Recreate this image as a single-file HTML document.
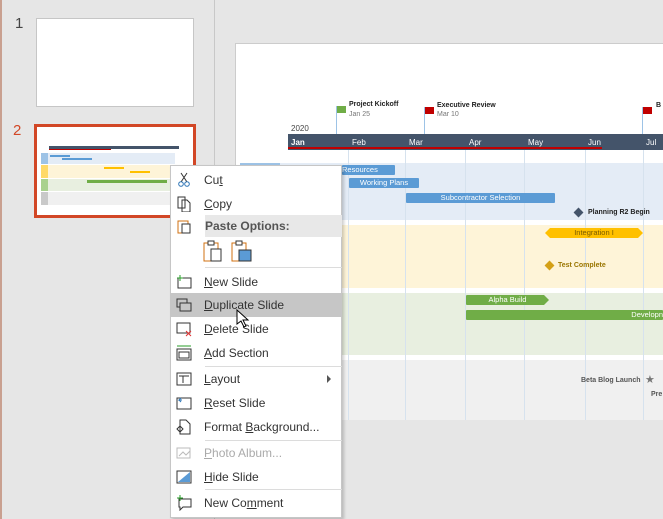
<!DOCTYPE html>
<html><head><meta charset="utf-8"><style>
*{margin:0;padding:0;box-sizing:border-box}
body{width:663px;height:519px;background:#e6e6e6;position:relative;overflow:hidden;font-family:"Liberation Sans",sans-serif}
.a{position:absolute}
.t{font-size:7px;font-weight:bold;color:#222;white-space:nowrap}
.bar{position:absolute;color:#fff;font-size:7.5px;text-align:center;line-height:10px;white-space:nowrap;overflow:hidden;border-radius:1px}
.mi{position:absolute;left:0;width:171px;height:24px;font-size:12px;color:#333;line-height:24px;padding-left:33px}
.mi svg{position:absolute;left:5px;top:4px}
.sep{position:absolute;left:34px;width:137px;height:1px;background:#dcdcdc}
u{text-decoration:underline}
</style></head><body>
<div class="a" style="left:0;top:0;width:2px;height:519px;background:#c9a090"></div>
<div class="a" style="left:214px;top:0;width:1px;height:519px;background:#c8c8c8"></div>
<div class="a" style="left:15px;top:15px;font-size:15px;color:#444">1</div>
<div class="a" style="left:36px;top:18px;width:158px;height:89px;background:#fff;border:1px solid #c6c6c6"></div>
<div class="a" style="left:13px;top:122px;font-size:15px;color:#d24726">2</div>
<div class="a" style="left:34px;top:124px;width:162px;height:94px;background:#fff;border:3px solid #d24726">
 <div class="a" style="left:12px;top:19px;width:130px;height:3px;background:#44546a"></div>
 <div class="a" style="left:12px;top:22px;width:62px;height:1px;background:#c00000"></div>
 <div class="a" style="left:4px;top:26px;width:134px;height:11px;background:#e4ecf6"></div>
 <div class="a" style="left:4px;top:38px;width:134px;height:13px;background:#fef4d8"></div>
 <div class="a" style="left:4px;top:52px;width:134px;height:12px;background:#e8efe0"></div>
 <div class="a" style="left:4px;top:65px;width:134px;height:13px;background:#f0f0f0"></div>
 <div class="a" style="left:4px;top:26px;width:7px;height:11px;background:#9dc3e6"></div>
 <div class="a" style="left:4px;top:38px;width:7px;height:13px;background:#ffd966"></div>
 <div class="a" style="left:4px;top:52px;width:7px;height:12px;background:#a9d18e"></div>
 <div class="a" style="left:4px;top:65px;width:7px;height:13px;background:#c9c9c9"></div>
 <div class="a" style="left:50px;top:53px;width:80px;height:3px;background:#70ad47"></div>
 <div class="a" style="left:13px;top:28px;width:20px;height:2px;background:#5b9bd5"></div>
 <div class="a" style="left:25px;top:31px;width:30px;height:2px;background:#5b9bd5"></div>
 <div class="a" style="left:67px;top:40px;width:20px;height:2px;background:#ffc000"></div>
 <div class="a" style="left:93px;top:44px;width:20px;height:2px;background:#ffc000"></div>
</div>
<div class="a" style="left:235px;top:43px;width:428px;height:377px;background:#fff;border-left:1px solid #ccc;border-top:1px solid #ccc"></div>
<div class="a" style="left:240px;top:163px;width:423px;height:57px;background:#e4ecf6"></div>
<div class="a" style="left:240px;top:225px;width:423px;height:63px;background:#fef4d8"></div>
<div class="a" style="left:240px;top:293px;width:423px;height:62px;background:#e8efe0"></div>
<div class="a" style="left:240px;top:360px;width:423px;height:60px;background:#f0f0f0"></div>
<div class="a" style="left:240px;top:163px;width:40px;height:4px;background:#9dc3e6"></div>
<div class="a" style="left:348px;top:150px;width:1px;height:270px;background:#d6e2ee"></div>
<div class="a" style="left:405px;top:150px;width:1px;height:270px;background:#d6e2ee"></div>
<div class="a" style="left:465px;top:150px;width:1px;height:270px;background:#d6e2ee"></div>
<div class="a" style="left:524px;top:150px;width:1px;height:270px;background:#d6e2ee"></div>
<div class="a" style="left:585px;top:150px;width:1px;height:270px;background:#d6e2ee"></div>
<div class="a" style="left:643px;top:150px;width:1px;height:270px;background:#d6e2ee"></div>
<div class="a" style="left:291px;top:124px;font-size:8px;color:#444">2020</div>
<div class="a" style="left:288px;top:134px;width:375px;height:16px;background:#44546a"></div>
<div class="a" style="left:288px;top:147px;width:314px;height:2px;background:#c00000"></div>
<div class="a" style="top:138px;left:291px;font-size:8px;color:#fff;font-weight:bold">Jan</div>
<div class="a" style="top:138px;left:352px;font-size:8px;color:#fff">Feb</div>
<div class="a" style="top:138px;left:409px;font-size:8px;color:#fff">Mar</div>
<div class="a" style="top:138px;left:469px;font-size:8px;color:#fff">Apr</div>
<div class="a" style="top:138px;left:528px;font-size:8px;color:#fff">May</div>
<div class="a" style="top:138px;left:588px;font-size:8px;color:#fff">Jun</div>
<div class="a" style="top:138px;left:646px;font-size:8px;color:#fff">Jul</div>
<div class="a" style="left:336px;top:106px;width:1px;height:28px;background:#9dc3e6"></div>
<div class="a" style="left:337px;top:106px;width:9px;height:7px;background:#70ad47"></div>
<div class="a t" style="left:349px;top:101px">Project Kickoff</div>
<div class="a" style="left:349px;top:111px;font-size:7px;color:#777">Jan 25</div>
<div class="a" style="left:424px;top:107px;width:1px;height:27px;background:#9dc3e6"></div>
<div class="a" style="left:425px;top:107px;width:9px;height:7px;background:#c00000"></div>
<div class="a t" style="left:437px;top:102px">Executive Review</div>
<div class="a" style="left:437px;top:111px;font-size:7px;color:#777">Mar 10</div>
<div class="a" style="left:642px;top:107px;width:1px;height:27px;background:#9dc3e6"></div>
<div class="a" style="left:643px;top:107px;width:9px;height:7px;background:#c00000"></div>
<div class="a t" style="left:656px;top:102px">B</div>
<div class="bar" style="left:342px;top:165px;width:53px;background:#5b9bd5;text-align:left">Resources</div>
<div class="bar" style="left:349px;top:178px;width:70px;background:#5b9bd5">Working Plans</div>
<div class="bar" style="left:406px;top:193px;width:149px;background:#5b9bd5">Subcontractor Selection</div>
<div class="a" style="left:575px;top:209px;width:7px;height:7px;background:#44546a;transform:rotate(45deg)"></div>
<div class="a t" style="left:588px;top:209px">Planning R2 Begin</div>
<div class="bar" style="left:545px;top:228px;width:98px;background:#ffc000;color:#7a5b00;clip-path:polygon(5px 0,93px 0,100% 50%,93px 100%,5px 100%,0 50%)">Integration I</div>
<div class="bar" style="left:642px;top:244px;width:21px;background:#ffc000;clip-path:polygon(5px 0,100% 0,100% 100%,5px 100%,0 50%)"></div>
<div class="a" style="left:546px;top:262px;width:7px;height:7px;background:#d4a017;transform:rotate(45deg)"></div>
<div class="a t" style="left:558px;top:262px;color:#9a7500">Test Complete</div>
<div class="bar" style="left:466px;top:295px;width:83px;background:#70ad47;clip-path:polygon(0 0,78px 0,100% 50%,78px 100%,0 100%)">Alpha Build</div>
<div class="bar" style="left:466px;top:310px;width:197px;background:#70ad47;text-align:right">Developn</div>
<div class="a t" style="left:581px;top:377px;color:#555">Beta Blog Launch</div>
<div class="a" style="left:645px;top:373px;font-size:11px;color:#777">★</div>
<div class="a t" style="left:651px;top:391px;color:#555">Pre</div>

<div class="a" style="left:170px;top:165px;width:172px;height:353px;background:#fff;border:1px solid #c6c6c6;box-shadow:2px 2px 3px rgba(0,0,0,.2)">
 <div class="mi" style="top:2px"><svg width="16" height="16"><path d="M5 1l6 9M11 1l-6 9" stroke="#333" fill="none"/><circle cx="5" cy="12" r="2.3" stroke="#2e75b6" fill="none"/><circle cx="11" cy="12" r="2.3" stroke="#2e75b6" fill="none"/></svg>Cu<u>t</u></div>
 <div class="mi" style="top:26px"><svg width="16" height="16"><path d="M2 1h7v11H2zM6 4h5l3 3v9H6z" stroke="#333" fill="#fff"/></svg><u>C</u>opy</div>
 <div class="mi" style="top:49px;left:34px;width:137px;height:22px;line-height:22px;background:#e8e8e8;padding-left:0;font-weight:bold;color:#555">Paste Options:</div>
 <svg class="a" style="left:5px;top:52px" width="16" height="16"><path d="M2 3h10v12H2z" stroke="#d07010" fill="none"/><path d="M6 6h8v9H6z" stroke="#333" fill="#fff"/></svg>
 <svg class="a" style="left:32px;top:74px" width="20" height="22"><path d="M1 3h14v18H1z" stroke="#d07010" fill="none"/><path d="M5 1h6v4H5z" stroke="#333" fill="#fff"/><path d="M8 9h10v12H8z" stroke="#333" fill="#fff"/></svg>
 <svg class="a" style="left:60px;top:74px" width="22" height="22"><path d="M1 3h14v18H1z" stroke="#d07010" fill="none"/><path d="M5 1h6v4H5z" stroke="#333" fill="#fff"/><path d="M8 10h12v11H8z" stroke="#333" fill="#5b9bd5"/></svg>
 <div class="sep" style="top:101px"></div>
 <div class="mi" style="top:104px"><svg width="16" height="16"><path d="M2 4h13v10H2z" stroke="#333" fill="none"/><path d="M4 1v6M1 4h6" stroke="#2a9d2a"/></svg><u>N</u>ew Slide</div>
 <div class="mi" style="top:127px;background:#c6c6c6"><svg width="16" height="16"><path d="M1 2h10v8H1z" stroke="#333" fill="none"/><path d="M4 6h11v8H4z" stroke="#333" fill="#c6c6c6"/></svg><u>D</u>uplicate Slide</div>
 <div class="mi" style="top:151px"><svg width="16" height="16"><path d="M1 2h13v10H1z" stroke="#333" fill="none"/><path d="M10 10l5 5M15 10l-5 5" stroke="#e03030"/></svg><u>D</u>elete Slide</div>
 <div class="mi" style="top:175px"><svg width="16" height="16"><path d="M1 1h14" stroke="#2a9d2a"/><path d="M1 4h14v11H1zM3 7h10v6H3z" stroke="#333" fill="none"/></svg><u>A</u>dd Section</div>
 <div class="sep" style="top:200px"></div>
 <div class="mi" style="top:201px"><svg width="16" height="16"><path d="M1 2h14v12H1zM3 5h10M7 5v7" stroke="#333" fill="none"/></svg><u>L</u>ayout</div>
 <div class="a" style="left:156px;top:209px;width:0;height:0;border-left:4px solid #555;border-top:4px solid transparent;border-bottom:4px solid transparent"></div>
 <div class="mi" style="top:225px"><svg width="16" height="16"><path d="M1 3h14v11H1z" stroke="#333" fill="none"/><path d="M6 5H3l2-2M3 5l2 2" stroke="#2e75b6" fill="none"/></svg><u>R</u>eset Slide</div>
 <div class="mi" style="top:249px"><svg width="16" height="16"><path d="M4 1h6l4 4v10H4zM1 10l3-3 3 3-3 3z" stroke="#333" fill="#fff"/></svg>Format <u>B</u>ackground...</div>
 <div class="sep" style="top:274px"></div>
 <div class="mi" style="top:275px;color:#aaa"><svg width="16" height="16"><path d="M1 3h13v10H1zM3 11l4-4 3 3 4-4" stroke="#bbb" fill="none"/></svg><u>P</u>hoto Album...</div>
 <div class="mi" style="top:299px"><svg width="16" height="16"><path d="M1 2h14v12H1z" stroke="#333" fill="none"/><path d="M2 13L14 3v10z" fill="#5b9bd5"/></svg><u>H</u>ide Slide</div>
 <div class="sep" style="top:323px"></div>
 <div class="mi" style="top:325px"><svg width="16" height="16"><path d="M3 4h12v8H7l-3 3v-3H3z" stroke="#333" fill="none"/><path d="M4 0v6M1 3h6" stroke="#2a9d2a"/></svg>New Co<u>m</u>ment</div>
</div>
<svg class="a" style="left:236px;top:309px" width="14" height="20"><path d="M1 1v14l4-3 3 6 2-1-3-6h5z" fill="#fff" stroke="#000"/></svg>
</body></html>
